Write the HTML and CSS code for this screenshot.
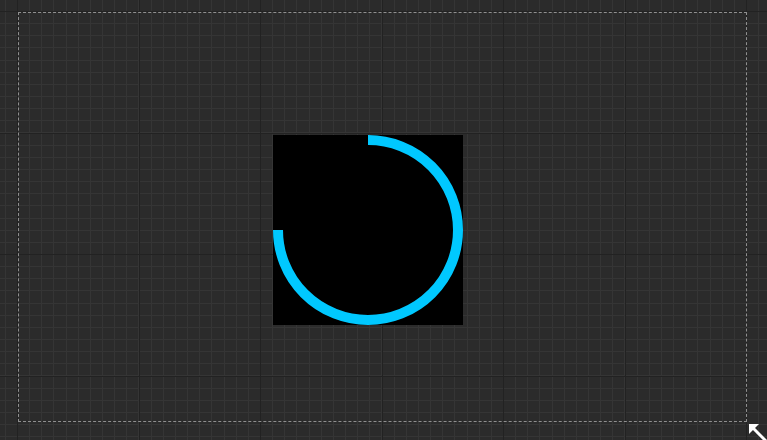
FILE: index.html
```html
<!DOCTYPE html>
<html>
<head>
<meta charset="utf-8">
<link rel="stylesheet" href="styles.css">
</head>
<body>
<div class="stage">
  <div class="frame">
    <div class="spinner">
      <svg class="arc" width="190" height="190" viewBox="0 0 190 190">
        <path d="M95 5 A90 90 0 1 1 5 95" fill="none" stroke="#00c8ff" stroke-width="10"/>
      </svg>
    </div>
  </div>
  <svg class="resize" width="24" height="24" viewBox="0 0 24 24">
    <path d="M4 4 L22 22" stroke="#ffffff" stroke-width="3" fill="none"/>
    <path d="M1 1 L11 1 L1 11 Z" fill="#ffffff"/>
  </svg>
</div>
</body>
</html>
```
FILE: styles.css
```css
html, body {
  margin: 0;
  padding: 0;
  background: #2b2b2b;
}
.stage {
  position: relative;
  width: 767px;
  height: 440px;
  overflow: hidden;
  box-sizing: border-box;
  padding: 12px 0 0 18px;
  background-color: #2b2b2b;
  background-image:
    repeating-linear-gradient(90deg, #222222 17px, #222222 18px, transparent 18px, transparent 138.5px),
    repeating-linear-gradient(180deg, #222222 11px, #222222 12px, transparent 12px, transparent 132.5px),
    repeating-linear-gradient(90deg, #353535 4.85px, #353535 5.85px, transparent 5.85px, transparent 17px),
    repeating-linear-gradient(180deg, #353535 11px, #353535 12px, transparent 12px, transparent 23.15px);
}
.frame {
  width: 729px;
  height: 410px;
  box-sizing: border-box;
  border: 1px dashed #8f8f8f;
  padding: 122px 0 0 254px;
}
.spinner {
  width: 190px;
  height: 190px;
  background: #000000;
}
.arc {
  display: block;
}
.resize {
  position: absolute;
  left: 748px;
  top: 423px;
}
```
